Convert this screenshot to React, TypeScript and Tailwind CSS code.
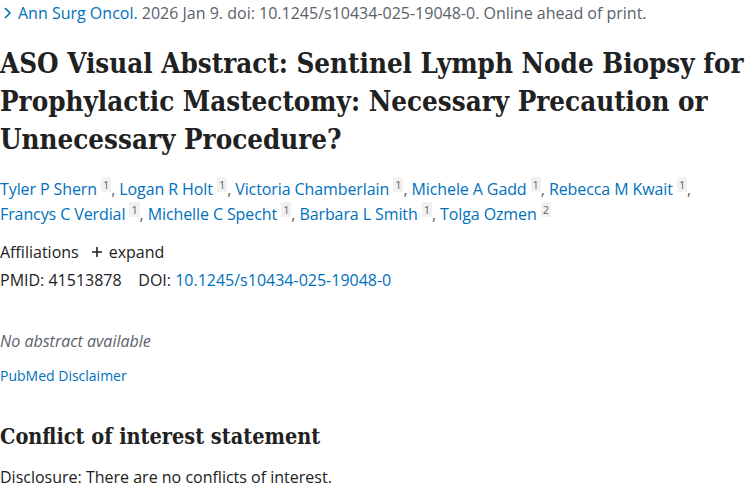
import React from "react"

const authors: [string, string][] = [
  ["Tyler P Shern", "1"],
  ["Logan R Holt", "1"],
  ["Victoria Chamberlain", "1"],
  ["Michele A Gadd", "1"],
  ["Rebecca M Kwait", "1"],
  ["Francys C Verdial", "1"],
  ["Michelle C Specht", "1"],
  ["Barbara L Smith", "1"],
  ["Tolga Ozmen", "2"],
]

const sans = "font-['Open_Sans',sans-serif]"
const serif = "font-['DejaVu_Serif_Condensed','DejaVu_Serif',serif]"

export default function App() {
  return (
    <div className={`bg-white w-[750px] h-[500px] overflow-hidden text-[#212121] ${sans}`}>
      <div className="flex items-center text-[16px] leading-[26px] text-[#5b616b]">
        <svg width="16" height="16" viewBox="0 0 16 16" className="mr-[2px]">
          <path d="M5 3 L10 8 L5 13" fill="none" stroke="#0071bc" strokeWidth="1.6" />
        </svg>
        <span className="text-[#0071bc]">Ann Surg Oncol.</span>
        <span>&nbsp;2026 Jan 9. doi: 10.1245/s10434-025-19048-0. Online ahead of print.</span>
      </div>

      <h1 className={`${serif} font-bold text-[27.5px] leading-[38px] mt-[18px] text-[#212121]`}>
        ASO Visual Abstract: Sentinel Lymph Node Biopsy for Prophylactic Mastectomy: Necessary Precaution or Unnecessary Procedure?
      </h1>

      <div className="mt-[19px] text-[16px] leading-[25px] pr-[10px] tracking-[-0.1px]">
        {authors.map(([name, sup], i) => (
          <span key={name}>
            <span className="text-[#0071bc]">{name}</span>{" "}
            <sup className="bg-[#f1f1f1] text-[#5b616b] text-[11px] px-[2px] -top-[6px] relative">{sup}</sup>
            {i < authors.length - 1 && <span className="text-[#5b616b]">, </span>}
          </span>
        ))}
      </div>

      <div className="mt-[11px] text-[16px] leading-[28px] flex items-center">
        <span>Affiliations</span>
        <span className="ml-[12px] flex items-center">
          <svg width="12" height="12" viewBox="0 0 12 12" className="mr-[6px]">
            <path d="M6 1 V11 M1 6 H11" stroke="#212121" strokeWidth="1.6" />
          </svg>
          expand
        </span>
      </div>
      <div className="text-[16px] leading-[28px]">
        PMID: 41513878&nbsp;&nbsp;&nbsp; DOI: <span className="text-[#0071bc]">10.1245/s10434-025-19048-0</span>
      </div>

      <div className="mt-[34px] text-[16px] leading-[26px] italic text-[#5b616b]">No abstract available</div>
      <div className="mt-[9px] text-[14px] leading-[26px] text-[#0071bc]">PubMed Disclaimer</div>

      <h2 className={`${serif} font-bold text-[21.5px] leading-[30px] mt-[33px]`}>Conflict of interest statement</h2>
      <div className="mt-[12px] text-[16px] leading-[26px]">Disclosure: There are no conflicts of interest.</div>
    </div>
  )
}
